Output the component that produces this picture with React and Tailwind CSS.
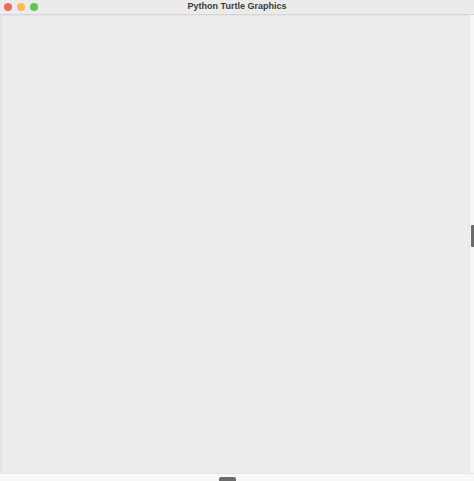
import React from "react";

const App = () => {
  return (
    <div className="w-[474px] h-[481px] flex flex-col bg-[#ececec] overflow-hidden" style={{ fontFamily: "'Liberation Sans', Arial, sans-serif" }}>
      {/* title bar */}
      <div className="h-[15px] flex items-center relative bg-[#ebebeb] border-b border-[#d6d6d6] shrink-0">
        <div className="flex gap-[5px] pl-[4px] items-center">
          <span className="w-[8px] h-[8px] rounded-full bg-[#ec6a5e]" />
          <span className="w-[8px] h-[8px] rounded-full bg-[#f4bf4f]" />
          <span className="w-[8px] h-[8px] rounded-full bg-[#61c554]" />
        </div>
        <div className="absolute inset-0 flex items-center justify-center text-[9px] font-bold text-[#3a3a3a]">
          Python Turtle Graphics
        </div>
      </div>

      {/* canvas + scrollbars */}
      <div className="flex-1 flex flex-col">
        <div className="flex-1 flex">
          <div className="flex-1 bg-[#ededed] border-l-[2px] border-t border-[#e4e4e4]" />
          <div className="w-[5px] bg-[#f6f6f6] border-l border-[#e8e8e8] flex flex-col justify-start">
            <div className="mt-[210px] ml-auto w-[3px] h-[22px] rounded-l-[1px] bg-[#6b6b6b]" />
          </div>
        </div>
        <div className="h-[8px] bg-[#f8f8f8] border-t border-[#e6e6e6] flex items-end">
          <div className="ml-[219px] w-[17px] h-[4px] rounded-t-[2px] bg-[#6b6b6b]" />
        </div>
      </div>
    </div>
  );
};

export default App;
